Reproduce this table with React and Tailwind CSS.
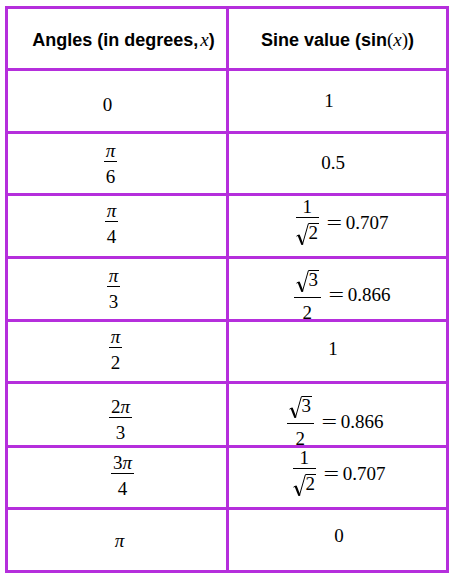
import React from "react";

const BORDER = "border-[#b52fdc]";

function Radical({ children }) {
  return (
    <span className="inline-flex items-start">
      <svg width="13" height="23" viewBox="0 0 13 23" className="block">
        <path d="M0.5 13.2 L2.6 12 L6.4 21.6 L12.4 0.6 L13 0.6" fill="none" stroke="#000" strokeWidth="1" />
        <path d="M2.6 12 L6.4 21.6" fill="none" stroke="#000" strokeWidth="2.2" />
      </svg>
      <span className="border-t border-black leading-[0.95] pr-[1px]">{children}</span>
    </span>
  );
}

function Frac({ num, den }) {
  return (
    <span className="inline-flex flex-col items-center align-middle">
      <span className="leading-none px-[2px]">{num}</span>
      <span className="h-px self-stretch bg-black mt-[1px] mb-[5px]" />
      <span className="leading-none">{den}</span>
    </span>
  );
}

function Eq({ frac, value }) {
  return (
    <span className="inline-flex items-center">
      {frac}
      <span className="inline-block scale-x-[1.45] ml-[10px] mr-[6px]">=</span>
      <span>{value}</span>
    </span>
  );
}

const Pi = () => <span className="italic">π</span>;

const rows = [
  {
    h: "h-[62.5px]",
    left: <span>0</span>,
    lpad: "pr-[19px] pt-[8px]",
    right: <span>1</span>,
    rpad: "pr-[17px]",
  },
  {
    h: "h-[62.5px]",
    left: <Frac num={<Pi />} den="6" />,
    lpad: "pr-[13px]",
    right: <span>0.5</span>,
    rpad: "pr-[9px]",
  },
  {
    h: "h-[62.5px]",
    left: <Frac num={<Pi />} den="4" />,
    lpad: "pr-[11px] pb-[5px]",
    right: <Eq frac={<Frac num="1" den={<Radical>2</Radical>} />} value="0.707" />,
    rpad: "pl-[9px] pb-[5px]",
  },
  {
    h: "h-[63px]",
    left: <Frac num={<Pi />} den="3" />,
    lpad: "pr-[7px]",
    right: <Eq frac={<Frac num={<Radical>3</Radical>} den="2" />} value="0.866" />,
    rpad: "pl-[9px] pt-[14px]",
  },
  {
    h: "h-[62.5px]",
    left: <Frac num={<Pi />} den="2" />,
    lpad: "pr-[3px] pb-[4px]",
    right: <span>1</span>,
    rpad: "pr-[9px] pb-[4px]",
  },
  {
    h: "h-[63.5px]",
    left: <Frac num={<span>2<Pi /></span>} den="3" />,
    lpad: "pl-[7px] pt-[11px]",
    right: <Eq frac={<Frac num={<Radical>3</Radical>} den="2" />} value="0.866" />,
    rpad: "pr-[5px] pt-[15px]",
  },
  {
    h: "h-[62px]",
    left: <Frac num={<span>3<Pi /></span>} den="4" />,
    lpad: "pl-[11px] pb-[4px]",
    right: <Eq frac={<Frac num="1" den={<Radical>2</Radical>} />} value="0.707" />,
    rpad: "pl-[3px] pb-[6px]",
  },
  {
    h: "h-[63px]",
    left: <Pi />,
    lpad: "pl-[5px] pt-[3px]",
    right: <span>0</span>,
    rpad: "pl-[3px] pb-[7px]",
  },
];

export default function App() {
  return (
    <div className="w-[456px] h-[578px] bg-white pl-[5px] pt-[6px]">
      <div
        className={`w-[444px] grid grid-cols-[221px_220px] border-l-[3px] border-t-[3px] ${BORDER} text-black`}
      >
        <div
          className={`h-[62px] border-r-[3px] border-b-[3px] ${BORDER} flex items-center justify-center pl-[13px] pt-[3px] font-bold text-[18px] font-['Liberation_Sans',sans-serif]`}
        >
          Angles (in degrees,
          <span className="font-['Liberation_Serif',serif] font-normal italic text-[19px] ml-[2px]">x</span>)
        </div>
        <div
          className={`h-[62px] border-r-[3px] border-b-[3px] ${BORDER} flex items-center justify-center pt-[3px] font-bold text-[18px] font-['Liberation_Sans',sans-serif]`}
        >
          Sine value (sin
          <span className="font-['Liberation_Serif',serif] font-normal text-[19px]">
            (<span className="italic">x</span>)
          </span>
          )
        </div>
        {rows.map((r, i) => (
          <React.Fragment key={i}>
            <div
              className={`${r.h} ${r.lpad} border-r-[3px] border-b-[3px] ${BORDER} overflow-hidden flex items-center justify-center font-['Liberation_Serif',serif] text-[19px]`}
            >
              {r.left}
            </div>
            <div
              className={`${r.h} ${r.rpad} border-r-[3px] border-b-[3px] ${BORDER} overflow-hidden flex items-center justify-center font-['Liberation_Serif',serif] text-[19px]`}
            >
              {r.right}
            </div>
          </React.Fragment>
        ))}
      </div>
    </div>
  );
}
